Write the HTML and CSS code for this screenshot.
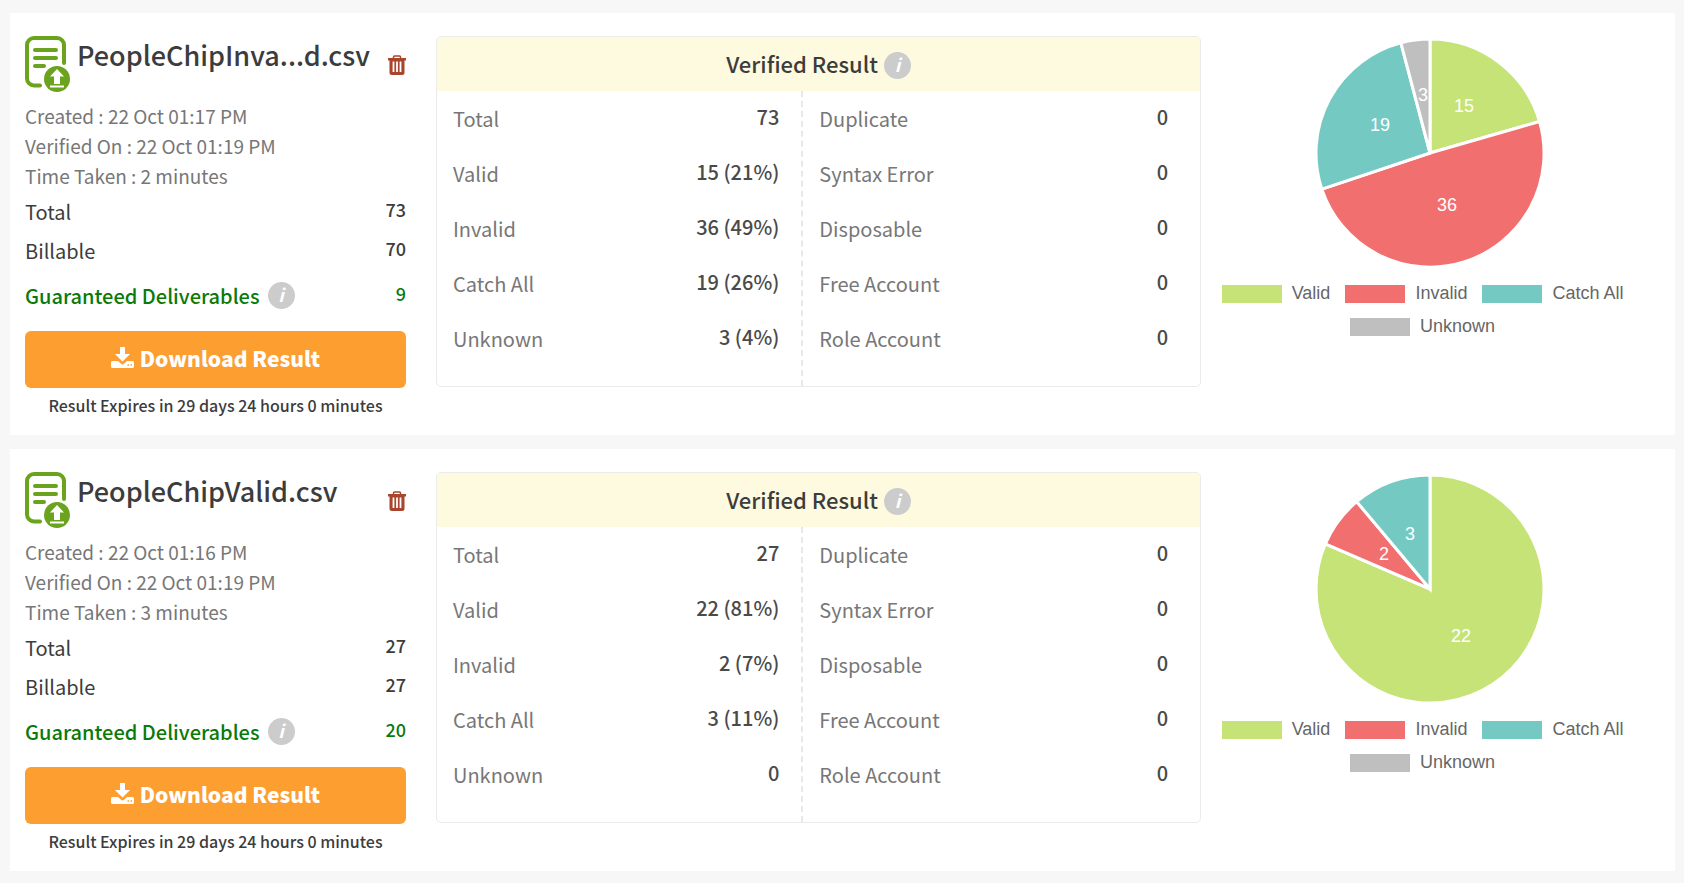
FILE: index.html
```html
<!DOCTYPE html>
<html lang="en">
<head>
    <meta charset="UTF-8">
    <meta name="viewport" content="width=device-width, initial-scale=1.0">
    <title>Verified Results</title>
    <link rel="stylesheet" href="styles.css">
</head>
<body>
    <!-- Shared icons -->
    <svg class="icon-defs" aria-hidden="true">
        <symbol id="icon-file" viewBox="0 0 45 56">
            <path d="M39 27V9a7 7 0 0 0-7-7H9a7 7 0 0 0-7 7v33.500a7 7 0 0 0 7 7h6" fill="none" stroke="#6ba31f" stroke-width="4" stroke-linecap="round"/>
            <path d="M10 14h21M10 22h21M10 30h9" fill="none" stroke="#6ba31f" stroke-width="4" stroke-linecap="round"/>
            <circle cx="32" cy="43" r="13" fill="#6ba31f"/>
            <path d="M32 33l7 7.500h-4V48h-6v-7.500h-4zM25 49.500h14v2H25z" fill="#fff"/>
        </symbol>
        <symbol id="icon-trash" viewBox="0 0 18 20">
            <path d="M5.500 3.500V2q0-1 1-1h5q1 0 1 1v1.500" fill="none" stroke="#a8452c" stroke-width="1.500"/>
            <path d="M0 3h18v2.500H0z" fill="#a8452c"/>
            <path d="M1.500 5h15v12.500q0 2.500-2.500 2.500H4q-2.500 0-2.500-2.500z" fill="#a8452c"/>
            <path d="M5.500 6.500v10.500M9 6.500v10.500M12.500 6.500v10.500" fill="none" stroke="#fff" stroke-width="1.800"/>
        </symbol>
        <symbol id="icon-download" viewBox="0 0 23 21">
            <path d="M9 0h5v7h5l-7.500 7.500L4 7h5z" fill="#fff"/>
            <path d="M1.500 14H7l3 2.800q1.500 1.200 3 0L16 14h5.500q1.500 0 1.500 1.500v4q0 1.500-1.500 1.500h-20Q0 21 0 19.500v-4Q0 14 1.500 14z" fill="#fff"/>
            <path d="M16.500 18h1.500M19.500 18h1.500" stroke="#fd9e31" stroke-width="1.500"/>
        </symbol>
    </svg>

    <!-- PeopleChipInvalid -->
    <section class="result-card">
        <div class="file-info">
            <div class="file-header">
                <svg class="file-icon"><use href="#icon-file"/></svg>
                <h2 class="file-name">PeopleChipInva...d.csv</h2>
                <button class="delete-btn" type="button" aria-label="Delete"><svg class="trash-icon"><use href="#icon-trash"/></svg></button>
            </div>
            <div class="file-meta">
                <div>Created : 22 Oct 01:17 PM</div>
                <div>Verified On : 22 Oct 01:19 PM</div>
                <div>Time Taken : 2 minutes</div>
            </div>
            <div class="stat-row"><span>Total</span><span class="stat-value">73</span></div>
            <div class="stat-row"><span>Billable</span><span class="stat-value">70</span></div>
            <div class="stat-row deliverables">
                <span class="deliverables-label">Guaranteed Deliverables <span class="info-icon">i</span></span>
                <span class="stat-value">9</span>
            </div>
            <button class="download-btn" type="button"><svg class="download-icon"><use href="#icon-download"/></svg>Download Result</button>
            <div class="expires">Result Expires in 29 days 24 hours 0 minutes</div>
        </div>

        <div class="verified-panel">
            <h3 class="panel-header">Verified Result <span class="info-icon">i</span></h3>
            <div class="panel-body">
                <div class="panel-column main-column">
                    <table>
                        <tr><th scope="row">Total</th><td>73</td></tr>
                        <tr><th scope="row">Valid</th><td>15 (21%)</td></tr>
                        <tr><th scope="row">Invalid</th><td>36 (49%)</td></tr>
                        <tr><th scope="row">Catch All</th><td>19 (26%)</td></tr>
                        <tr><th scope="row">Unknown</th><td>3 (4%)</td></tr>
                    </table>
                </div>
                <div class="panel-column extra-column">
                    <table>
                        <tr><th scope="row">Duplicate</th><td>0</td></tr>
                        <tr><th scope="row">Syntax Error</th><td>0</td></tr>
                        <tr><th scope="row">Disposable</th><td>0</td></tr>
                        <tr><th scope="row">Free Account</th><td>0</td></tr>
                        <tr><th scope="row">Role Account</th><td>0</td></tr>
                    </table>
                </div>
            </div>
        </div>

        <div class="chart">
            <svg class="pie" viewBox="0 0 228 228">
                <path class="slice valid" d="M114 114V0A114 114 0 0 1 223.570 82.520Z"/>
                <path class="slice invalid" d="M114 114L223.570 82.520A114 114 0 0 1 5.880 150.150Z"/>
                <path class="slice catch-all" d="M114 114L5.880 150.150A114 114 0 0 1 84.880 3.780Z"/>
                <path class="slice unknown" d="M114 114L84.880 3.780A114 114 0 0 1 114 0Z"/>
                <text x="148" y="73">15</text>
                <text x="131" y="172">36</text>
                <text x="64" y="92">19</text>
                <text x="107" y="62">3</text>
            </svg>
            <ul class="legend">
                <li><span class="swatch valid"></span>Valid</li>
                <li><span class="swatch invalid"></span>Invalid</li>
                <li><span class="swatch catch-all"></span>Catch All</li>
                <li><span class="swatch unknown"></span>Unknown</li>
            </ul>
        </div>
    </section>

    <!-- PeopleChipValid -->
    <section class="result-card">
        <div class="file-info">
            <div class="file-header">
                <svg class="file-icon"><use href="#icon-file"/></svg>
                <h2 class="file-name">PeopleChipValid.csv</h2>
                <button class="delete-btn" type="button" aria-label="Delete"><svg class="trash-icon"><use href="#icon-trash"/></svg></button>
            </div>
            <div class="file-meta">
                <div>Created : 22 Oct 01:16 PM</div>
                <div>Verified On : 22 Oct 01:19 PM</div>
                <div>Time Taken : 3 minutes</div>
            </div>
            <div class="stat-row"><span>Total</span><span class="stat-value">27</span></div>
            <div class="stat-row"><span>Billable</span><span class="stat-value">27</span></div>
            <div class="stat-row deliverables">
                <span class="deliverables-label">Guaranteed Deliverables <span class="info-icon">i</span></span>
                <span class="stat-value">20</span>
            </div>
            <button class="download-btn" type="button"><svg class="download-icon"><use href="#icon-download"/></svg>Download Result</button>
            <div class="expires">Result Expires in 29 days 24 hours 0 minutes</div>
        </div>

        <div class="verified-panel">
            <h3 class="panel-header">Verified Result <span class="info-icon">i</span></h3>
            <div class="panel-body">
                <div class="panel-column main-column">
                    <table>
                        <tr><th scope="row">Total</th><td>27</td></tr>
                        <tr><th scope="row">Valid</th><td>22 (81%)</td></tr>
                        <tr><th scope="row">Invalid</th><td>2 (7%)</td></tr>
                        <tr><th scope="row">Catch All</th><td>3 (11%)</td></tr>
                        <tr><th scope="row">Unknown</th><td>0</td></tr>
                    </table>
                </div>
                <div class="panel-column extra-column">
                    <table>
                        <tr><th scope="row">Duplicate</th><td>0</td></tr>
                        <tr><th scope="row">Syntax Error</th><td>0</td></tr>
                        <tr><th scope="row">Disposable</th><td>0</td></tr>
                        <tr><th scope="row">Free Account</th><td>0</td></tr>
                        <tr><th scope="row">Role Account</th><td>0</td></tr>
                    </table>
                </div>
            </div>
        </div>

        <div class="chart">
            <svg class="pie" viewBox="0 0 228 228">
                <path class="slice valid" d="M114 114V0A114 114 0 1 1 9.320 68.850Z"/>
                <path class="slice invalid" d="M114 114L9.320 68.850A114 114 0 0 1 40.720 26.670Z"/>
                <path class="slice catch-all" d="M114 114L40.720 26.670A114 114 0 0 1 114 0Z"/>
                <text x="145" y="167">22</text>
                <text x="68" y="85">2</text>
                <text x="94" y="65">3</text>
            </svg>
            <ul class="legend">
                <li><span class="swatch valid"></span>Valid</li>
                <li><span class="swatch invalid"></span>Invalid</li>
                <li><span class="swatch catch-all"></span>Catch All</li>
                <li><span class="swatch unknown"></span>Unknown</li>
            </ul>
        </div>
    </section>
</body>
</html>
```
FILE: styles.css
```css
/* Global Styling */
* {
    box-sizing: border-box;
}
body {
    margin: 0;
    padding: 13px 9px 12px 10px;
    display: flex;
    flex-direction: column;
    gap: 14px;
    background-color: #f7f7f7;
    color: #3c3c3c;
    font-family: "Noto Sans CJK SC", "Noto Sans", sans-serif;
    font-size: 20px;
}
.icon-defs {
    display: none;
}
/* Result Card */
.result-card {
    display: flex;
    align-items: flex-start;
    padding: 23px 16px 13px 15px;
    background-color: #fff;
}
/* File Info */
.file-info {
    flex: none;
    width: 411px;
    padding-right: 30px;
}
.file-header {
    display: flex;
    align-items: flex-start;
    height: 65px;
}
.file-icon {
    flex: none;
    width: 45px;
    height: 56px;
}
.file-name {
    flex: 1;
    min-width: 0;
    margin: 0 0 0 7px;
    font-size: 27px;
    font-weight: 500;
    line-height: 38px;
    white-space: nowrap;
}
.delete-btn {
    display: flex;
    margin-top: 19px;
    padding: 0;
    border: none;
    background: none;
    cursor: pointer;
}
.trash-icon {
    width: 18px;
    height: 20px;
}
.file-meta {
    margin-bottom: 1px;
    color: #777;
    font-size: 19px;
    line-height: 30px;
}
.stat-row {
    display: flex;
    justify-content: space-between;
    align-items: center;
    line-height: 39px;
}
.stat-value {
    padding-bottom: 4px;
    font-size: 18px;
    font-weight: 500;
    line-height: 35px;
}
.deliverables {
    height: 51px;
    color: #0a7a0a;
    font-weight: 500;
}
.deliverables-label {
    display: flex;
    align-items: center;
    gap: 8px;
}
.info-icon {
    display: inline-block;
    width: 27px;
    height: 27px;
    border-radius: 50%;
    background-color: #ccc;
    color: #fff;
    font-size: 18px;
    font-style: italic;
    font-weight: 700;
    line-height: 25px;
    text-align: center;
}
/* Download Button */
.download-btn {
    display: flex;
    justify-content: center;
    align-items: center;
    gap: 6px;
    width: 100%;
    height: 57px;
    margin-top: 10px;
    padding: 0 0 3px;
    border: none;
    border-radius: 6px;
    background-color: #fd9e31;
    color: #fff;
    font-family: inherit;
    font-size: 21px;
    font-weight: 900;
    cursor: pointer;
}
.download-icon {
    width: 23px;
    height: 21px;
    margin-bottom: 2px;
}
.expires {
    font-size: 16px;
    font-weight: 500;
    line-height: 34px;
    text-align: center;
}
/* Verified Result */
.verified-panel {
    flex: 5;
    min-width: 0;
    border: 1px solid #ebebeb;
    border-radius: 5px;
    overflow: hidden;
}
.panel-header {
    display: flex;
    justify-content: center;
    align-items: center;
    gap: 6px;
    height: 54px;
    margin: 0;
    padding-bottom: 2px;
    background-color: #fefadf;
    font-size: 22px;
    font-weight: 500;
}
.panel-header .info-icon {
    margin-top: 4px;
}
.panel-body {
    display: flex;
}
.panel-column {
    padding-bottom: 20px;
}
.main-column {
    width: 48%;
    padding-left: 16px;
    padding-right: 22px;
    border-right: 2px dashed #e8e8e8;
}
.extra-column {
    width: 52%;
    padding-left: 16px;
    padding-right: 32px;
}
.panel-column table {
    width: 100%;
    border-collapse: collapse;
}
.panel-column th {
    height: 55px;
    padding: 0;
    color: #777;
    font-weight: 400;
    line-height: 29px;
    text-align: left;
}
.panel-column td {
    padding: 0 0 4px;
    color: #4a4a4a;
    font-weight: 500;
    line-height: 29px;
    text-align: right;
}
/* Pie Chart */
.chart {
    flex: 3;
    min-width: 0;
    padding-top: 3px;
    font-family: "Liberation Sans", Arial, sans-serif;
    font-size: 18px;
}
.pie {
    display: block;
    width: 228px;
    height: 228px;
    margin: 0 auto;
}
.pie text {
    fill: #fff;
    text-anchor: middle;
}
.slice {
    stroke: #fff;
    stroke-width: 3px;
}
.slice.valid {
    fill: #c6e377;
}
.slice.invalid {
    fill: #f26f70;
}
.slice.catch-all {
    fill: #74cac3;
}
.slice.unknown {
    fill: #bfbfbf;
}
.legend {
    display: flex;
    flex-wrap: wrap;
    justify-content: center;
    row-gap: 15px;
    margin: 18px 0 0;
    padding: 0;
    list-style: none;
    color: #666;
}
.legend li {
    display: flex;
    align-items: flex-start;
    gap: 10px;
    margin-right: 15px;
    line-height: 16px;
}
.swatch {
    width: 60px;
    height: 18px;
}
.swatch.valid {
    background-color: #c6e377;
}
.swatch.invalid {
    background-color: #f26f70;
}
.swatch.catch-all {
    background-color: #74cac3;
}
.swatch.unknown {
    background-color: #bfbfbf;
}
```
